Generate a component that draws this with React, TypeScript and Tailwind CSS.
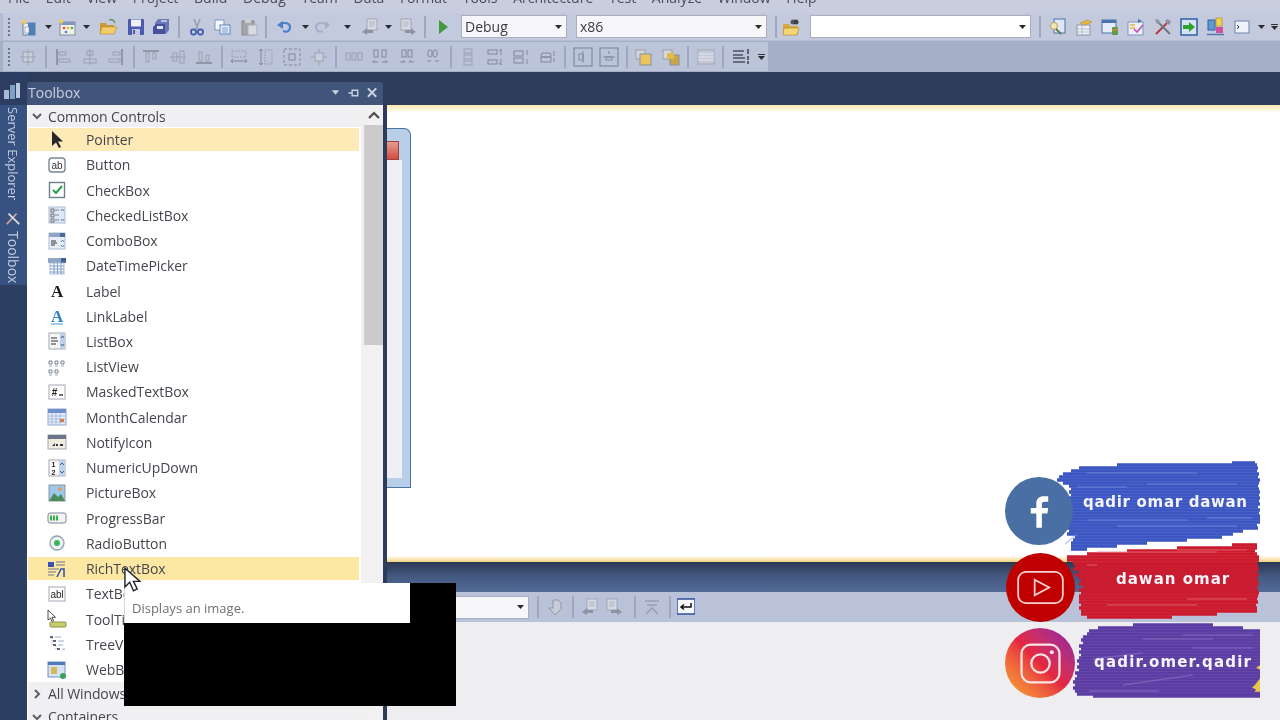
import type { ReactNode } from 'react'

function I({ children, className = 'w-[18px] h-[18px]' }: { children: ReactNode; className?: string }) {
  return (
    <svg viewBox="0 0 18 18" className={`${className} shrink-0 overflow-visible`} fill="none">
      {children}
    </svg>
  )
}

function Slot({ className, children }: { className: string; children?: ReactNode }) {
  return <div className={`${className} h-full flex items-center justify-center shrink-0`}>{children}</div>
}

function Caret() {
  return (
    <svg viewBox="0 0 7 4" className="w-[7px] h-[4px] shrink-0">
      <path d="M0 0h7L3.5 4z" fill="#2a2a30" />
    </svg>
  )
}

function Sep({ className }: { className: string }) {
  return <div className={`${className} w-[2px] h-[22px] shrink-0 bg-[#9ea7bd]`} />
}

function Grip() {
  return (
    <div className="w-[12px] h-full flex flex-col items-center justify-center gap-[2px] shrink-0">
      <span className="w-[2px] h-[2px] bg-[#6b7489]" />
      <span className="w-[2px] h-[2px] bg-[#6b7489]" />
      <span className="w-[2px] h-[2px] bg-[#6b7489]" />
      <span className="w-[2px] h-[2px] bg-[#6b7489]" />
      <span className="w-[2px] h-[2px] bg-[#6b7489]" />
    </div>
  )
}

function Overflow() {
  return (
    <div className="flex flex-col items-center gap-[1px]">
      <span className="w-[7px] h-[1px] bg-[#333]" />
      <Caret />
    </div>
  )
}

// toolbar 1
const NewProject = () => (
  <I><rect x="3" y="5" width="12" height="12" fill="#e8edf6" stroke="#5a7fb0" /><rect x="8" y="5" width="7" height="12" fill="#4d7fb8" /><rect x="5" y="9" width="4" height="6" fill="#f6f6f6" stroke="#8a8a8a" strokeWidth=".6" /><path d="M4 0l1 3 3 1-3 1-1 3-1-3-3-1 3-1z" fill="#f5cf4a" /></I>
)
const AddItem = () => (
  <I><rect x="2" y="4" width="15" height="13" fill="#f2efe4" stroke="#7f8ca5" /><rect x="2" y="4" width="15" height="3" fill="#7f96bd" /><circle cx="6" cy="10" r="1.3" fill="#d94f3c" /><circle cx="10" cy="10" r="1.3" fill="#e5b83a" /><circle cx="14" cy="10" r="1.3" fill="#5aa84a" /><circle cx="8" cy="14" r="1.3" fill="#5a7fc0" /><path d="M3 0l1 2.5 2.5 1-2.5 1L3 7 2 4.500l-2-1 2-1z" fill="#f5cf4a" /></I>
)
const OpenFolder = () => (
  <I><path d="M1 5h6l1 2h7v9H1z" fill="#c99b36" /><path d="M3 9h15l-3 7H1z" fill="#f2ce6a" stroke="#b98a2c" strokeWidth=".6" /><path d="M10 2c3-1 5 0 6 3" stroke="#4f8f45" strokeWidth="1.2" /></I>
)
const SaveIcon = () => (
  <I><rect x="1" y="1" width="16" height="16" rx="1" fill="#4a5ab0" /><rect x="4" y="1.500" width="10" height="7" fill="#eef1f8" /><rect x="5" y="11" width="8" height="6" fill="#c3c9e0" /><rect x="6" y="12" width="2" height="4" fill="#4a5ab0" /></I>
)
const SaveAllIcon = () => (
  <I><path d="M6 1h11v11l-3 4H3V5z" fill="#6a78b8" /><path d="M4 6h9v10H1V9z" fill="#46539c" /><rect x="5" y="8" width="6" height="3" fill="#dfe4f3" /><rect x="9" y="2" width="6" height="2" fill="#b8c2e4" /></I>
)
const CutIcon = () => (
  <I><path d="M6 1l4 10M12 1L8 11" stroke="#9aa0ad" strokeWidth="1.6" /><circle cx="5.500" cy="14" r="2.600" stroke="#3f5cab" strokeWidth="1.700" /><circle cx="12.500" cy="14" r="2.600" stroke="#3f5cab" strokeWidth="1.700" /></I>
)
const CopyIcon = () => (
  <I><rect x="2" y="2" width="9" height="10" fill="#f6f8fc" stroke="#7d97bc" /><rect x="7" y="7" width="10" height="9" fill="#e7eefa" stroke="#5f88bf" /><path d="M9 10h6M9 12h6M9 14h6" stroke="#5d8ac4" strokeWidth=".8" /></I>
)
const PasteIcon = () => (
  <I><rect x="2" y="3" width="12" height="14" fill="#a4a5a8" stroke="#8a8c94" /><rect x="5" y="1" width="6" height="4" fill="#cfd0d5" /><rect x="8" y="7" width="9" height="10" fill="#d8dae2" stroke="#a9acb8" /></I>
)
const UndoIcon = () => (
  <I><path d="M8 13c5 2 7-1 7-4 0-4-5-5-10-3" stroke="#4a80cc" strokeWidth="2.200" /><path d="M2 7l6-4v8z" fill="#4a80cc" /></I>
)
const RedoIcon = () => (
  <I><path d="M10 13c-5 2-7-1-7-4 0-4 5-5 10-3" stroke="#a9b0c3" strokeWidth="2" /><path d="M17 7l-5-4v8z" fill="#a9b0c3" /></I>
)
const NavBack = () => (
  <I><rect x="6" y="1" width="10" height="11" fill="#d6dae5" stroke="#a1a6b4" /><path d="M8 4h6M8 6h6M8 8h5" stroke="#a1a6b4" strokeWidth=".7" /><path d="M1 14l5-4v2h6v3H6v2z" fill="#8c93a3" /></I>
)
const NavFwd = () => (
  <I><rect x="2" y="1" width="10" height="11" fill="#d6dae5" stroke="#a1a6b4" /><path d="M4 4h6M4 6h6M4 8h5" stroke="#a1a6b4" strokeWidth=".7" /><path d="M17 14l-5-4v2H6v3h6v2z" fill="#8c93a3" /></I>
)
const PlayIcon = () => <I><path d="M5 2l9 7-9 7z" fill="#3f9a3c" /></I>
const FindFolder = () => (
  <I><path d="M1 6h6l1 2h8v9H1z" fill="#d9a93e" /><path d="M2 10h15l-2 7H1z" fill="#f4d676" stroke="#a9842c" strokeWidth=".6" /><circle cx="11" cy="4" r="2.500" fill="#55565e" /><circle cx="14" cy="4" r="2.500" fill="#3f4048" /></I>
)
const Sol = () => (
  <I><rect x="6" y="1" width="11" height="14" fill="#dfe6f4" stroke="#4b73ae" /><circle cx="6" cy="8" r="3.500" fill="#f1e6b8" stroke="#b99f4f" /><path d="M8 11l5 5" stroke="#5a7d45" strokeWidth="1.800" /></I>
)
const PropsIcon = () => (
  <I><rect x="2" y="7" width="13" height="10" fill="#eef0f6" stroke="#8b93a8" /><path d="M2 11h13M2 14h13M7 7v10" stroke="#a5adc0" strokeWidth=".7" /><path d="M5 5l7-3 5 2-7 3z" fill="#e5b83a" stroke="#a9842c" strokeWidth=".5" /></I>
)
const ObjIcon = () => (
  <I><rect x="1" y="2" width="14" height="13" fill="#e6ecf7" stroke="#4b73ae" /><rect x="1" y="2" width="14" height="3" fill="#4b73ae" /><rect x="11" y="9" width="6" height="8" rx="1" fill="#5f9c4a" /><path d="M11 12h6" stroke="#d08a3a" strokeWidth="1.500" /></I>
)
const TaskIcon = () => (
  <I><rect x="1" y="4" width="15" height="13" fill="#eef0f9" stroke="#7b93c4" /><path d="M3 7h5M3 10h5" stroke="#e5b83a" strokeWidth="1.500" /><path d="M7 11l3 3 6-7" stroke="#c24fb8" strokeWidth="1.700" /><path d="M11 1l4 2-4 2z" fill="#4b73ae" /></I>
)
const ToolsIcon = () => (
  <I><path d="M2 16L13 5" stroke="#b43a3a" strokeWidth="2" /><path d="M16 16L5 5" stroke="#6f7684" strokeWidth="2" /><path d="M11 3l3-2 3 3-2 3z" fill="#8a919f" /><path d="M1 1l4 1 1 3-3 1z" fill="#8a919f" /></I>
)
const ImportIcon = () => (
  <I><rect x="1" y="1" width="16" height="16" fill="#d7e3f5" stroke="#2f5ea8" strokeWidth="1.500" /><path d="M3 7h6V4l6 5-6 5v-3H3z" fill="#2da52d" /></I>
)
const ExtIcon = () => (
  <I><rect x="1" y="2" width="7" height="10" fill="#5b9bd0" stroke="#2f5ea8" /><rect x="9" y="0" width="6" height="8" fill="#f0d24a" stroke="#a9842c" strokeWidth=".6" /><rect x="9" y="9" width="7" height="6" fill="#d24fa0" /><path d="M0 16.500h17" stroke="#4b73ae" strokeWidth="1.400" /></I>
)
const ConsoleIcon = () => (
  <I><rect x="2" y="3" width="14" height="12" fill="#eef2fa" stroke="#6f85ac" /><path d="M4 7l2 2-2 2" stroke="#333" strokeWidth="1" /></I>
)

// toolbar 2 layout glyphs, all greyed out
const g = '#98a0b2'
const g2 = '#808899'
const AlignGrid = () => <I><rect x="4" y="4" width="10" height="10" fill="#c9cedb" stroke={g} /><path d="M9 1v16M1 9h16" stroke={g} strokeWidth=".8" /></I>
const AlignL = () => <I><path d="M3 1v16" stroke={g2} strokeWidth="1.500" /><rect x="5" y="4" width="7" height="3" stroke={g} /><rect x="5" y="11" width="11" height="3" stroke={g} /></I>
const AlignC = () => <I><path d="M9 1v16" stroke={g} /><rect x="6" y="3" width="6" height="4" stroke={g} /><rect x="3" y="11" width="12" height="4" stroke={g} /></I>
const AlignR = () => <I><path d="M15 1v16" stroke={g2} strokeWidth="1.500" /><rect x="6" y="4" width="7" height="3" stroke={g} /><rect x="2" y="11" width="11" height="3" stroke={g} /></I>
const AlignT = () => <I><path d="M1 3h16" stroke={g2} strokeWidth="1.500" /><rect x="4" y="5" width="3" height="9" stroke={g} /><rect x="11" y="5" width="3" height="6" stroke={g} /></I>
const AlignM = () => <I><path d="M1 9h16" stroke={g} /><rect x="4" y="5" width="4" height="8" stroke={g} /><rect x="11" y="3" width="4" height="12" stroke={g} /></I>
const AlignB = () => <I><path d="M1 15h16" stroke={g2} strokeWidth="1.500" /><rect x="4" y="4" width="3" height="9" stroke={g} /><rect x="11" y="7" width="3" height="6" stroke={g} /></I>
const SameW = () => <I><rect x="2" y="3" width="14" height="6" strokeDasharray="2 1" stroke={g} /><path d="M1 13h16M1 13l2-2M1 13l2 2M17 13l-2-2M17 13l-2 2" stroke={g2} /></I>
const SameH = () => <I><rect x="8" y="2" width="7" height="14" strokeDasharray="2 1" stroke={g} /><path d="M4 1v16M4 1L2 3M4 1l2 2M4 17l-2-2M4 17l2-2" stroke={g2} /></I>
const SameS = () => <I><rect x="1" y="1" width="16" height="16" strokeDasharray="3 2" stroke={g2} /><rect x="6" y="6" width="6" height="6" stroke={g2} /></I>
const SizeGrid = () => <I><rect x="5" y="5" width="8" height="8" fill="#c9cedb" stroke={g} /><path d="M9 1v3M9 14v3M1 9h3M14 9h3" stroke={g} /></I>
const HEq = () => <I><rect x="1" y="5" width="4" height="7" stroke={g} /><rect x="7" y="5" width="4" height="7" stroke={g} /><rect x="13" y="5" width="4" height="7" stroke={g} /></I>
const HInc = () => <I><rect x="3" y="2" width="4" height="7" stroke={g2} /><rect x="11" y="2" width="4" height="7" stroke={g2} /><path d="M1 14h6M11 14h6M2 14l2-2M16 14l-2-2" stroke={g2} /></I>
const HDec = () => <I><rect x="4" y="2" width="4" height="7" stroke={g2} /><rect x="10" y="2" width="4" height="7" stroke={g2} /><path d="M2 14h5M11 14h5M7 14l-2-2M11 14l2-2" stroke={g2} /></I>
const HRem = () => <I><rect x="4" y="2" width="4" height="7" rx="2" stroke={g2} /><rect x="9" y="2" width="4" height="7" rx="2" stroke={g2} /><path d="M3 13h4M11 13h4" stroke={g2} /></I>
const VEq = () => <I><rect x="5" y="1" width="8" height="4" stroke={g} /><rect x="5" y="7" width="8" height="4" stroke={g} /><rect x="5" y="13" width="8" height="4" stroke={g} /></I>
const VInc = () => <I><rect x="2" y="2" width="9" height="4" stroke={g2} /><rect x="2" y="12" width="9" height="4" stroke={g2} /><path d="M15 1v6M15 11v6M15 1l-2 2M15 17l-2-2" stroke={g2} /></I>
const VDec = () => <I><rect x="2" y="3" width="9" height="5" stroke={g2} /><rect x="2" y="10" width="9" height="5" stroke={g2} /><path d="M15 2v5M15 11v5" stroke={g2} /></I>
const VRem = () => <I><rect x="2" y="5" width="10" height="4" rx="2" stroke={g2} /><rect x="2" y="9" width="10" height="5" stroke={g2} /><path d="M15 3v5M15 10v4" stroke={g2} /></I>
const CenterH = () => <I><rect x="0" y="0" width="18" height="18" stroke="#7d8ba8" strokeWidth="1.200" /><path d="M9 3v12" stroke="#7d8ba8" /><rect x="5" y="6" width="4" height="6" stroke="#7d8ba8" /></I>
const CenterV = () => <I><rect x="0" y="0" width="18" height="18" stroke="#7d8ba8" strokeWidth="1.200" /><path d="M3 9h12" stroke="#7d8ba8" /><rect x="6" y="9" width="6" height="3" stroke="#7d8ba8" /><path d="M9 3v3" stroke="#7d8ba8" /></I>
const Front = () => <I><rect x="1" y="2" width="9" height="9" fill="#d4d7df" stroke="#9a9da8" /><rect x="5" y="6" width="11" height="11" fill="#eac45c" stroke="#8a8f9c" /></I>
const Back = () => <I><rect x="1" y="2" width="9" height="9" fill="#d4d7df" stroke="#9a9da8" /><rect x="8" y="7" width="9" height="10" fill="#c7a748" stroke="#8a8f9c" /><rect x="5" y="5" width="7" height="6" fill="#e0bb4a" /></I>
const TabOrder = () => <I><rect x="1" y="2" width="16" height="14" fill="#c4cad9" stroke="#a0a7b8" /><path d="M1 6h16M1 9h16M1 12h16" stroke="#e3e6ee" /></I>
const TabIdx = () => <I><path d="M1 3h11M1 7h10M1 10h12M1 14h12" stroke="#4a5162" strokeWidth="1.400" /><path d="M15 1h2v5h-2zM15 8h2v4h-2zM15 13h2v3h-2z" fill="#5a6274" /></I>

function Menu() {
  const items = ['File', 'Edit', 'View', 'Project', 'Build', 'Debug', 'Team', 'Data', 'Format', 'Tools', 'Architecture', 'Test', 'Analyze', 'Window', 'Help']
  return (
    <div className="h-[13px] bg-[#c8cede] overflow-hidden flex items-end pl-[8px] pb-[5px] gap-[15.7px] text-[14px] leading-[20px] text-[#4a4d58] shrink-0">
      {items.map((m) => (
        <span key={m} className="shrink-0">{m}</span>
      ))}
    </div>
  )
}

function Combo({ className, label }: { className: string; label?: string }) {
  return (
    <div className={`${className} h-[23px] bg-[#f7f7fa] border border-[#a9afbf] flex items-center justify-between pl-[3px] pr-[4px] text-[14px] text-[#3a3a40] shrink-0`}>
      <span>{label}</span>
      <Caret />
    </div>
  )
}

function ToolbarOne() {
  return (
    <div className="h-[28px] bg-[#b4bcd3] pl-[3px] shrink-0">
      <div className="h-[27px] w-full bg-[#c3cadd] flex items-center">
        <Grip />
        <Slot className="w-[28px]"><NewProject /></Slot>
        <Slot className="w-[10px]"><Caret /></Slot>
        <Slot className="w-[28px]"><AddItem /></Slot>
        <Slot className="w-[11px]"><Caret /></Slot>
        <Slot className="w-[31px]"><OpenFolder /></Slot>
        <Slot className="w-[25px]"><SaveIcon /></Slot>
        <Slot className="w-[26px]"><SaveAllIcon /></Slot>
        <Sep className="ml-[4px] mr-[4px]" />
        <Slot className="w-[25px]"><CutIcon /></Slot>
        <Slot className="w-[26px]"><CopyIcon /></Slot>
        <Slot className="w-[27px]"><PasteIcon /></Slot>
        <Sep className="ml-[3px] mr-[3px]" />
        <Slot className="w-[28px]"><UndoIcon /></Slot>
        <Slot className="w-[14px]"><Caret /></Slot>
        <Slot className="w-[20px]"><RedoIcon /></Slot>
        <Slot className="w-[30px]"><Caret /></Slot>
        <Slot className="w-[16px]"><NavBack /></Slot>
        <Slot className="w-[20px]"><Caret /></Slot>
        <Slot className="w-[20px]"><NavFwd /></Slot>
        <Sep className="ml-[6px] mr-[6px]" />
        <Slot className="w-[22px]"><PlayIcon /></Slot>
        <Combo className="w-[106px] ml-[7px]" label="Debug" />
        <Combo className="w-[191px] ml-[9px]" label="x86" />
        <Sep className="ml-[8px] mr-[7px]" />
        <Slot className="w-[14px]"><FindFolder /></Slot>
        <Combo className="w-[221px] ml-[12px] bg-white" />
        <Sep className="ml-[8px] mr-[3px]" />
        <Slot className="w-[26.4px]"><Sol /></Slot>
        <Slot className="w-[26.4px]"><PropsIcon /></Slot>
        <Slot className="w-[26.4px]"><ObjIcon /></Slot>
        <Slot className="w-[26.4px]"><TaskIcon /></Slot>
        <Slot className="w-[26.4px]"><ToolsIcon /></Slot>
        <Slot className="w-[26.4px]"><ImportIcon /></Slot>
        <Slot className="w-[26.4px]"><ExtIcon /></Slot>
        <Slot className="w-[26.4px]"><ConsoleIcon /></Slot>
        <Slot className="w-[12px]"><Caret /></Slot>
        <Slot className="w-[14px]"><Overflow /></Slot>
      </div>
    </div>
  )
}

function ToolbarTwo() {
  const S = ({ children }: { children: ReactNode }) => <Slot className="w-[26.5px]">{children}</Slot>
  const Sp = () => <Sep className="mx-[3.25px]" />
  return (
    <div className="h-[31px] bg-[#a5afc7] pl-[3px] flex shrink-0">
      <div className="w-[765px] h-[29px] mt-[1px] bg-[#bcc4d9] flex items-center">
        <Grip />
        <S><AlignGrid /></S>
        <Sp />
        <S><AlignL /></S><S><AlignC /></S><S><AlignR /></S>
        <Sp />
        <S><AlignT /></S><S><AlignM /></S><S><AlignB /></S>
        <Sp />
        <S><SameW /></S><S><SameH /></S><S><SameS /></S><S><SizeGrid /></S>
        <Sp />
        <S><HEq /></S><S><HInc /></S><S><HDec /></S><S><HRem /></S>
        <Sp />
        <S><VEq /></S><S><VInc /></S><S><VDec /></S><S><VRem /></S>
        <Sp />
        <S><CenterH /></S><S><CenterV /></S>
        <Sp />
        <S><Front /></S><S><Back /></S>
        <Sp />
        <S><TabOrder /></S>
        <Sp />
        <S><TabIdx /></S>
        <Slot className="w-[14px]"><Overflow /></Slot>
      </div>
    </div>
  )
}

// toolbox item glyphs
const PointerG = () => <I><path d="M4 0v15l4-3.500 3 5.500 2-1-3-5.500h5z" fill="#26262b" /></I>
const ButtonG = () => (
  <I><rect x="1" y="2" width="16" height="14" rx="3" fill="#fff" stroke="#7b8698" strokeWidth="1.400" /><text x="9" y="13" textAnchor="middle" fontSize="10" fill="#333" fontFamily="Liberation Sans">ab</text></I>
)
const CheckG = () => <I><rect x="1.500" y="1.500" width="15" height="15" fill="#fff" stroke="#6d7f8f" strokeWidth="1.400" /><path d="M5 9l3 3 6-7" stroke="#29a04a" strokeWidth="2" /></I>
const CheckedListG = () => (
  <I><rect x="1" y="1" width="16" height="16" fill="#dfe8f5" stroke="#a9bbd4" /><rect x="3" y="3" width="3" height="3" stroke="#555" strokeWidth=".8" /><rect x="3" y="8" width="3" height="3" stroke="#555" strokeWidth=".8" /><rect x="3" y="13" width="3" height="3" stroke="#555" strokeWidth=".8" /><path d="M7 4h4M7 9h4M7 14h4" stroke="#7b8698" /><path d="M13 5l1.500-2 1.500 2M13 13l1.500 2 1.500-2" stroke="#5c7fae" /></I>
)
const ComboG = () => (
  <I><rect x="1" y="1" width="16" height="16" fill="#e8eef7" stroke="#a9bbd4" /><rect x="1" y="1" width="16" height="4" fill="#8ea5c4" /><rect x="12" y="1" width="5" height="4" fill="#4b6a94" /><path d="M3 9h5M3 11h6M3 13h4" stroke="#333" /><path d="M13 10l1.500-2 1.500 2M13 13l1.500 2 1.500-2" stroke="#5c7fae" /></I>
)
const DateG = () => (
  <I><rect x="0" y="1" width="18" height="5" fill="#8ea5c4" /><rect x="13" y="1" width="5" height="5" fill="#3f6499" /><rect x="2" y="6" width="14" height="11" fill="#fff" stroke="#a9bbd4" /><path d="M2 9h14M2 12h14M2 15h14M6 6v11M9.500 6v11M13 6v11" stroke="#7d9ccb" /></I>
)
const LabelG = () => <I><text x="9" y="15" textAnchor="middle" fontSize="17" fontWeight="700" fill="#1c1c22" fontFamily="Liberation Serif">A</text></I>
const LinkG = () => <I><text x="9" y="15" textAnchor="middle" fontSize="17" fontWeight="700" fill="#2f7fcb" fontFamily="Liberation Serif">A</text><path d="M3 17h12" stroke="#6fb0e8" strokeWidth="1.300" /></I>
const ListBoxG = () => (
  <I><rect x="1" y="1" width="16" height="16" fill="#f5f5f5" stroke="#a2a8b5" /><rect x="12" y="1" width="5" height="16" fill="#bcd0ea" /><path d="M3 6h6M3 9h7M3 12h5" stroke="#333" /><path d="M13 6l1.500-2 1.500 2M13 12l1.500 2 1.500-2" stroke="#3f6499" /></I>
)
const ListViewG = () => (
  <I><path d="M1 3h3v3H1zM7 3h3v3H7zM13 3h3v3h-3z" stroke="#6c7486" strokeWidth=".9" /><path d="M1 12h3v3H1zM7 12h3v3H7z" stroke="#6c7486" strokeWidth=".9" /><path d="M1 8h3M7 8h3M13 8h3M1 17h3M7 17h3" stroke="#9ab0cc" /></I>
)
const MaskedG = () => <I><rect x="1" y="2" width="16" height="14" fill="#fff" stroke="#a2a8b5" /><text x="6.500" y="13" textAnchor="middle" fontSize="10" fontWeight="700" fill="#222" fontFamily="Liberation Sans">#</text><path d="M11 12h4" stroke="#222" strokeWidth="1.300" /></I>
const MonthG = () => (
  <I><rect x="0" y="1" width="18" height="16" fill="#e9eefb" stroke="#93a9d4" /><rect x="0" y="1" width="18" height="4" fill="#6f8ed0" /><path d="M0 8h18M0 11h18M0 14h18M4 5v12M8 5v12M12 5v12" stroke="#a6bbe0" /><rect x="12" y="11" width="4" height="3" fill="#d87a50" /></I>
)
const NotifyG = () => (
  <I><rect x="0" y="2" width="18" height="14" fill="#f0ede0" stroke="#a2a8b5" /><rect x="0" y="2" width="18" height="4" fill="#6b7488" /><path d="M4 13l3-3v3zM8 11h2v2H8zM12 11h3v2h-3z" fill="#2f3442" /></I>
)
const NumericG = () => (
  <I><rect x="1" y="1" width="16" height="16" fill="#fafafa" stroke="#a2a8b5" /><rect x="11" y="1" width="6" height="16" fill="#bcd0ea" /><text x="5.500" y="8" textAnchor="middle" fontSize="7" fontWeight="700" fill="#222" fontFamily="Liberation Sans">1</text><text x="5.500" y="16" textAnchor="middle" fontSize="7" fontWeight="700" fill="#222" fontFamily="Liberation Sans">2</text><path d="M12 6l2-2 2 2M12 12l2 2 2-2" stroke="#3f6499" /></I>
)
const PictureG = () => (
  <I><rect x="1" y="1" width="16" height="16" fill="#9fc7ea" stroke="#8b97a8" /><path d="M1 17l5-8 4 4 3-3 4 7z" fill="#4d8a5a" /><circle cx="12" cy="5" r="2" fill="#e59a5a" /></I>
)
const ProgressG = () => (
  <I><rect x="0" y="4" width="18" height="10" rx="2" fill="#f3f3f3" stroke="#7b8698" /><path d="M3 6.500v5M6 6.500v5M9 6.500v5" stroke="#32b24a" strokeWidth="2" /></I>
)
const RadioG = () => <I><circle cx="9" cy="9" r="7" fill="#eef3f6" stroke="#8fa2ae" strokeWidth="1.300" /><circle cx="9" cy="9" r="3" fill="#3db35b" /></I>
const RichG = () => (
  <I><rect x="0" y="2" width="6" height="5" fill="#3b4fb0" /><path d="M8 2h9M8 5h9M0 9h11M0 12h8M0 15h6" stroke="#6b7488" /><path d="M9 17l4-8h3v8" stroke="#2f4fa8" strokeWidth="1.500" /></I>
)
const TextBoxG = () => <I><rect x="1" y="2" width="16" height="14" fill="#fff" stroke="#a2a8b5" /><text x="9" y="13" textAnchor="middle" fontSize="10" fill="#222" fontFamily="Liberation Sans">abl</text></I>
const ToolTipG = () => (
  <I><path d="M0 0v10l2.500-2 1.500 3.500 1.500-.700-1.500-3.500h3.500z" fill="#fff" stroke="#222" strokeWidth=".8" /><rect x="2" y="12" width="16" height="5" rx="1" fill="#c6cf6a" stroke="#8b9150" /></I>
)
const TreeG = () => (
  <I><path d="M2 2h3M5 6h3M5 10h3M9 14h3" stroke="#5c6678" strokeWidth="2" /><path d="M7 2h6M10 6h6M10 10h5M14 14h3" stroke="#9ab0cc" /><path d="M4 3v8M8 11v3" stroke="#9aa2b2" strokeDasharray="1 1" /></I>
)
const WebG = () => (
  <I><rect x="0" y="1" width="17" height="15" fill="#d7e3f3" stroke="#6f93c4" /><rect x="0" y="1" width="17" height="3" fill="#4f7bb8" /><rect x="3" y="6" width="6" height="7" fill="#d2b95c" /><circle cx="15" cy="15" r="3" fill="#3da05a" /></I>
)

const tools: { name: string; icon: ReactNode; active?: string }[] = [
  { name: 'Pointer', icon: <PointerG />, active: 'bg-[#feeab6]' },
  { name: 'Button', icon: <ButtonG /> },
  { name: 'CheckBox', icon: <CheckG /> },
  { name: 'CheckedListBox', icon: <CheckedListG /> },
  { name: 'ComboBox', icon: <ComboG /> },
  { name: 'DateTimePicker', icon: <DateG /> },
  { name: 'Label', icon: <LabelG /> },
  { name: 'LinkLabel', icon: <LinkG /> },
  { name: 'ListBox', icon: <ListBoxG /> },
  { name: 'ListView', icon: <ListViewG /> },
  { name: 'MaskedTextBox', icon: <MaskedG /> },
  { name: 'MonthCalendar', icon: <MonthG /> },
  { name: 'NotifyIcon', icon: <NotifyG /> },
  { name: 'NumericUpDown', icon: <NumericG /> },
  { name: 'PictureBox', icon: <PictureG /> },
  { name: 'ProgressBar', icon: <ProgressG /> },
  { name: 'RadioButton', icon: <RadioG /> },
  { name: 'RichTextBox', icon: <RichG />, active: 'bg-[#fde8a3]' },
  { name: 'TextBox', icon: <TextBoxG /> },
  { name: 'ToolTip', icon: <ToolTipG /> },
  { name: 'TreeView', icon: <TreeG /> },
  { name: 'WebBrowser', icon: <WebG /> },
]

function Chevron({ open }: { open: boolean }) {
  return (
    <svg viewBox="0 0 10 10" className="w-[10px] h-[10px] ml-[4px] mr-[6px] shrink-0" fill="none">
      <path d={open ? 'M1 3l4 4 4-4' : 'M3 1l4 4-4 4'} stroke="#5a5f6b" strokeWidth="2" />
    </svg>
  )
}

function GroupHeader({ label, open, className }: { label: string; open: boolean; className: string }) {
  return (
    <div className={`${className} flex items-center bg-[#f0eff2] text-[14px] text-[#45474f]`}>
      <Chevron open={open} />
      <span className="-tracking-[0.1px]">{label}</span>
    </div>
  )
}

function Toolbox() {
  return (
    <div className="w-[358px] h-full flex flex-col pt-[10px] pr-[2px] shrink-0 bg-[#2c3c5a]">
      <div className="h-[23px] bg-[#41557a] rounded-t-[3px] flex items-center pl-[1px] pr-[4px] pb-[2px] text-[14px] text-[#c9d2e1] shrink-0">
        <span className="flex-1">Toolbox</span>
        <svg viewBox="0 0 54 12" className="w-[50px] h-[12px]" fill="none">
          <path d="M3 3h8L7 8z" fill="#c9d2e1" />
          <path d="M21 6h4M25 3h6v6h-6zM25 3v6" stroke="#c9d2e1" strokeWidth="1.500" />
          <path d="M42 1l9 9M51 1l-9 9" stroke="#c9d2e1" strokeWidth="2.200" />
        </svg>
      </div>
      <div className="flex-1 flex min-h-0 bg-white overflow-hidden">
        <div className="w-[334px] shrink-0 flex flex-col pl-[1px]">
          <GroupHeader label="Common Controls" open className="h-[22px] shrink-0" />
          {tools.map((t) => (
            <div key={t.name} className="h-[25.24px] shrink-0 flex items-center">
              <div className={`w-[331px] h-[23px] flex items-center text-[14px] text-[#45474f] -tracking-[0.05px] ${t.active ?? ''}`}>
                <div className="w-[58px] pl-[20px] flex justify-start shrink-0">{t.icon}</div>
                <span>{t.name}</span>
              </div>
            </div>
          ))}
          <GroupHeader label="All Windows Forms" open={false} className="h-[23px] shrink-0" />
          <GroupHeader label="Containers" open className="h-[23px] shrink-0" />
        </div>
        <div className="flex-1 flex flex-col bg-[#f1f1f1] pl-[3px]">
          <div className="h-[20px] flex items-center justify-center shrink-0">
            <svg viewBox="0 0 12 8" className="w-[12px] h-[8px]" fill="none">
              <path d="M1 7l5-5 5 5" stroke="#4a4a50" strokeWidth="2.200" />
            </svg>
          </div>
          <div className="h-[220px] bg-[#cbcbcb]" />
        </div>
      </div>
    </div>
  )
}

function SideStrip() {
  return (
    <div className="w-[27px] h-full bg-[#2c3f62] shrink-0 flex flex-col items-center pt-[10px]">
      <svg viewBox="0 0 18 18" className="w-[18px] h-[18px] -ml-[3px] mb-[5px] shrink-0">
        <rect x="1" y="8" width="5" height="9" fill="#a9bcd6" />
        <rect x="7" y="3" width="5" height="14" fill="#7fa0c8" />
        <rect x="13" y="1" width="4" height="15" fill="#b9c9e0" />
      </svg>
      <div className="w-full h-[180px] bg-[#375180] flex flex-col items-center text-[13px] leading-[24px] text-[#c2cddf] shrink-0 pr-[2px]">
        <div className="[writing-mode:vertical-rl] h-[105px] pt-[2px] shrink-0">Server Explorer</div>
        <svg viewBox="0 0 18 18" className="w-[16px] h-[16px] shrink-0" fill="none">
          <path d="M2 16L13 4" stroke="#c9a0a0" strokeWidth="2" />
          <path d="M16 16L4 4" stroke="#d9dfe9" strokeWidth="2" />
        </svg>
        <div className="[writing-mode:vertical-rl] mt-[5px] text-[14px]">Toolbox</div>
      </div>
    </div>
  )
}

function Designer() {
  return (
    <div className="flex-1 min-w-0 flex flex-col border-l-[2px] border-[#2c3c5a]">
      <div className="h-[33px] bg-[#2c3c5a] shrink-0" />
      <div className="h-[451px] shrink-0 bg-white">
        <div className="h-[8px] bg-linear-to-b from-[#fbe8ae] to-[#fffef9]" />
        <div className="w-[24px] h-[360px] mt-[15px] bg-[#b9cfe9] border-t border-r border-b border-[#47749a] rounded-tr-[7px] flex flex-col pr-[8px]">
          <div className="w-[12px] h-[19px] mt-[12px] bg-linear-to-b from-[#e79a90] to-[#cf4c3f] border border-[#a14040] border-l-0 shrink-0" />
          <div className="flex-1 mb-[9px] bg-[#f1eff6]" />
        </div>
      </div>
      <div className="h-[6px] bg-linear-to-b from-[#fffdf5] to-[#f2d27e] shrink-0" />
      <div className="h-[30px] bg-linear-to-b from-[#2b3852] via-[#455a82] to-[#526a96] shrink-0" />
      <div className="h-[30px] bg-[#b9c2d8] flex items-center shrink-0">
        <Combo className="w-[142px] bg-[#f5f5f8]" />
        <Sep className="ml-[8px] mr-[7px]" />
        <Slot className="w-[18px]"><svg viewBox="0 0 18 18" className="w-[18px] h-[18px]"><path d="M9 17l-6-7h4V2h5l3 3v5h1z" fill="#c8ccd8" stroke="#8f97aa" /></svg></Slot>
        <Sep className="ml-[8px] mr-[4px]" />
        <Slot className="w-[24px]"><NavBack /></Slot>
        <Slot className="w-[24px]"><NavFwd /></Slot>
        <Sep className="ml-[8px] mr-[6px]" />
        <Slot className="w-[20px]"><svg viewBox="0 0 18 18" className="w-[18px] h-[18px]" fill="none"><path d="M2 3h14M4 7h10M3 16l6-6 6 6" stroke="#98a0b2" strokeWidth="1.500" /></svg></Slot>
        <Sep className="ml-[7px] mr-[5px]" />
        <Slot className="w-[20px]"><svg viewBox="0 0 18 18" className="w-[18px] h-[18px]" fill="none"><rect x="0" y="1" width="18" height="15" fill="#f7f8fc" stroke="#2f4f9c" strokeWidth="1.500" /><path d="M14 5v4H5M7 6.500L4 9l3 2.500" stroke="#111" strokeWidth="1.500" /></svg></Slot>
      </div>
      <div className="flex-1 bg-[#eeedf0]" />
    </div>
  )
}

// dry brush stroke: one thick horizontal line per row, rows are [y, x1, x2]
function Brush({ className, viewBox, color, light, rows, streaks }: { className: string; viewBox: string; color: string; light: string; rows: number[][]; streaks: string }) {
  return (
    <svg viewBox={viewBox} className={`absolute ${className}`} fill="none">
      {rows.map(([y, x1, x2]) => (
        <line key={y} x1={x1} x2={x2} y1={y} y2={y} stroke={color} strokeWidth="3.600" />
      ))}
      <path d={streaks} stroke={light} strokeWidth="1.300" opacity=".5" />
    </svg>
  )
}

const blueRows = [
  [3, 175, 198], [5, 60, 200], [8, 22, 201], [11, 14, 200], [14, 6, 202], [17, 2, 201], [20, 0, 203], [23, 6, 202], [26, 12, 201],
  [29, 14, 202], [32, 12, 203], [35, 14, 202], [38, 12, 203], [41, 14, 202], [44, 12, 203], [47, 14, 201], [50, 12, 203],
  [53, 12, 202], [56, 14, 203], [59, 10, 203], [62, 8, 203], [65, 10, 200], [68, 8, 201], [71, 12, 186], [74, 10, 176],
  [77, 18, 165], [80, 16, 130], [83, 14, 90], [86, 14, 60], [89, 14, 30],
]
const redRows = [
  [2, 165, 190], [5, 110, 190], [8, 60, 188], [11, 20, 190], [14, 0, 192], [17, 0, 192], [20, 6, 190], [23, 8, 191],
  [26, 6, 192], [29, 12, 190], [32, 8, 192], [35, 12, 190], [38, 14, 191], [41, 12, 192], [44, 16, 190], [47, 12, 191],
  [50, 14, 192], [53, 12, 191], [56, 12, 190], [59, 12, 191], [62, 14, 189], [65, 12, 190], [68, 14, 190], [71, 14, 150], [74, 20, 105],
]
const purpleRows = [
  [2, 60, 140], [5, 25, 170], [8, 16, 187], [11, 14, 187], [14, 10, 187], [17, 8, 187], [20, 10, 187], [23, 6, 187], [26, 8, 187],
  [29, 6, 187], [32, 8, 187], [35, 6, 187], [38, 4, 187], [41, 6, 187], [44, 4, 187], [47, 6, 187], [50, 2, 187], [53, 4, 187],
  [56, 2, 187], [59, 0, 187], [62, 2, 187], [65, 0, 187], [68, 2, 187], [71, 4, 187], [73, 20, 187],
]

function Social() {
  const label = "absolute font-['DejaVu_Sans',sans-serif] font-bold text-[15px] text-[#f6f4fb] whitespace-nowrap"
  return (
    <>
      <Brush
        className="left-[1057px] top-[460px] w-[203px] h-[91px]"
        viewBox="0 0 203 91"
        color="#3c57c2"
        light="#7a90e2"
        rows={blueRows}
        streaks="M30 13h110M20 27h50M90 24h90M30 60h100M60 66h120M20 74L8 84M150 58h45"
      />
      <Brush
        className="left-[1067px] top-[543px] w-[193px] h-[76px]"
        viewBox="0 0 193 76"
        color="#cc1b2e"
        light="#ec7079"
        rows={redRows}
        streaks="M30 9h120M110 7h70M40 62h90M120 56h60M20 22h10"
      />
      <Brush
        className="left-[1073px] top-[623px] w-[187px] h-[75px]"
        viewBox="0 0 187 75"
        color="#5b3da3"
        light="#8f7bc8"
        rows={purpleRows}
        streaks="M70 16h70M20 36l50-6M50 62l70-10M110 12h70M16 68h70M120 25h60"
      />
      <svg viewBox="0 0 12 40" className="absolute left-[1252px] top-[660px] w-[8px] h-[37px]">
        <path d="M12 0L6 4l6 3zM12 20L4 30l-4 4 6 2-2 4h8z" fill="#e8c94a" />
      </svg>

      <div className={`${label} left-[1083px] top-[491px] tracking-[0.7px]`}>qadir omar dawan</div>
      <div className={`${label} left-[1116px] top-[568px] tracking-[1px]`}>dawan omar</div>
      <div className={`${label} left-[1094px] top-[651px] tracking-[1.2px]`}>qadir.omer.qadir</div>

      <div className="absolute left-[1005px] top-[477px] w-[68px] h-[68px] rounded-full bg-[#4a6fa5] flex items-center justify-center">
        <svg viewBox="0 0 24 40" className="w-[19px] h-[36px] mt-[2px]">
          <path d="M8 40V22H1v-7h7V9c0-6 4-9 9-9h6v7h-4c-3 0-4 1-4 3v5h8l-1 7h-7v18z" fill="#fff" />
        </svg>
      </div>
      <div className="absolute left-[1006px] top-[553px] w-[69px] h-[69px] rounded-full bg-[#c00000] flex items-center justify-center">
        <svg viewBox="0 0 48 34" className="w-[47px] h-[33px]" fill="none">
          <rect x="1" y="1" width="46" height="32" rx="8" stroke="#f6d4d4" strokeWidth="1.800" />
          <path d="M18 9l15 8-15 8z" stroke="#f6d4d4" strokeWidth="1.800" />
        </svg>
      </div>
      <div className="absolute left-[1005px] top-[628px] w-[70px] h-[70px] rounded-full bg-linear-to-tr from-[#f7a92f] via-[#e5263f] to-[#8d14a6] flex items-center justify-center">
        <svg viewBox="0 0 40 40" className="w-[41px] h-[41px]" fill="none">
          <rect x="1.500" y="1.500" width="37" height="37" rx="9" stroke="#fde4e4" strokeWidth="2.200" />
          <circle cx="20" cy="20" r="9" stroke="#fde4e4" strokeWidth="2.200" />
          <circle cx="31" cy="9" r="2" fill="#fde4e4" />
        </svg>
      </div>
    </>
  )
}

export default function App() {
  return (
    <div className="relative w-[1280px] h-[720px] overflow-hidden flex flex-col bg-white font-['Open_Sans',sans-serif] blur-[0.45px]">
      <Menu />
      <ToolbarOne />
      <ToolbarTwo />
      <div className="flex-1 flex min-h-0">
        <SideStrip />
        <Toolbox />
        <Designer />
      </div>

      {/* redaction box and tooltip sitting over the list */}
      <div className="absolute left-[124px] top-[583px] w-[332px] h-[123px] bg-black" />
      <div className="absolute left-[124px] top-[583px] w-[286px] h-[40px] bg-white border-l border-[#d8d8d8] pl-[7px] pt-[15px] text-[13px] leading-[20px] text-[#707070]">
        Displays an image.
      </div>
      <svg viewBox="0 0 18 26" className="absolute left-[124px] top-[567px] w-[17px] h-[25px]">
        <path d="M1 1v20l5-5 4 9 4-2-4-8h7z" fill="#fff" stroke="#22262e" strokeWidth="1.500" />
      </svg>

      <Social />
    </div>
  )
}
